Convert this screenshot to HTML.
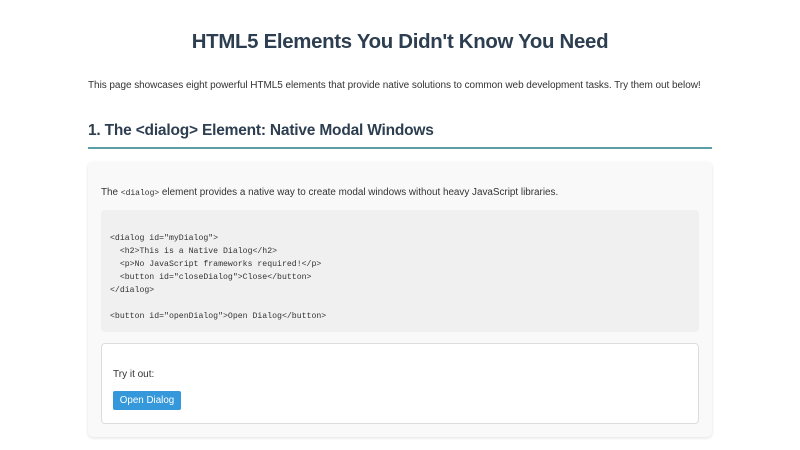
<!DOCTYPE html>
<html><head><style>
body{margin:0;background:#fff;font-family:"Liberation Sans",sans-serif;color:#333;width:800px;height:450px;overflow:hidden;position:relative}
.a{position:absolute;white-space:nowrap}
h1{position:absolute;left:0;width:800px;text-align:center;top:31px;margin:0;font-size:20.4px;color:#2c3e50;font-weight:bold;letter-spacing:-0.3px}
h2{position:absolute;left:88px;top:122px;margin:0;font-size:15.5px;color:#2c3e50;letter-spacing:-0.2px}
.line{position:absolute;left:88px;top:147px;width:624px;height:2px;background:#5b9ea8}
.card{position:absolute;left:88px;top:162px;width:624px;height:275px;background:#f9f9f9;border-radius:5px;box-shadow:0 1px 3px rgba(0,0,0,.12)}
.code{position:absolute;left:101px;top:210px;width:598px;height:122px;background:#f0f0f0;border-radius:4px}
pre{position:absolute;left:110px;top:232px;margin:0;font-family:"Liberation Mono","DejaVu Sans Mono",monospace;font-size:8.2px;line-height:13px;color:#333}
.try{position:absolute;left:101px;top:343px;width:596px;height:79px;background:#fff;border:1px solid #ddd;border-radius:4px}
.btn{position:absolute;left:113px;top:391px;width:68px;height:19px;background:#3498db;color:#fff;font-size:9.8px;line-height:20px;text-align:center;border-radius:2px}
code{font-family:"Liberation Mono",monospace;font-size:8px}
</style></head><body>
<h1>HTML5 Elements You Didn't Know You Need</h1>
<div class="a" style="left:88px;top:80px;font-size:10px;letter-spacing:-0.05px">This page showcases eight powerful HTML5 elements that provide native solutions to common web development tasks. Try them out below!</div>
<h2>1. The &lt;dialog&gt; Element: Native Modal Windows</h2>
<div class="line"></div>
<div class="card"></div>
<div class="a" style="left:101px;top:187px;font-size:9.9px">The <code>&lt;dialog&gt;</code> element provides a native way to create modal windows without heavy JavaScript libraries.</div>
<div class="code"></div>
<pre>&lt;dialog id="myDialog"&gt;
  &lt;h2&gt;This is a Native Dialog&lt;/h2&gt;
  &lt;p&gt;No JavaScript frameworks required!&lt;/p&gt;
  &lt;button id="closeDialog"&gt;Close&lt;/button&gt;
&lt;/dialog&gt;

&lt;button id="openDialog"&gt;Open Dialog&lt;/button&gt;</pre>
<div class="try"></div>
<div class="a" style="left:113px;top:369px;font-size:10px">Try it out:</div>
<div class="btn">Open Dialog</div>
</body></html>
